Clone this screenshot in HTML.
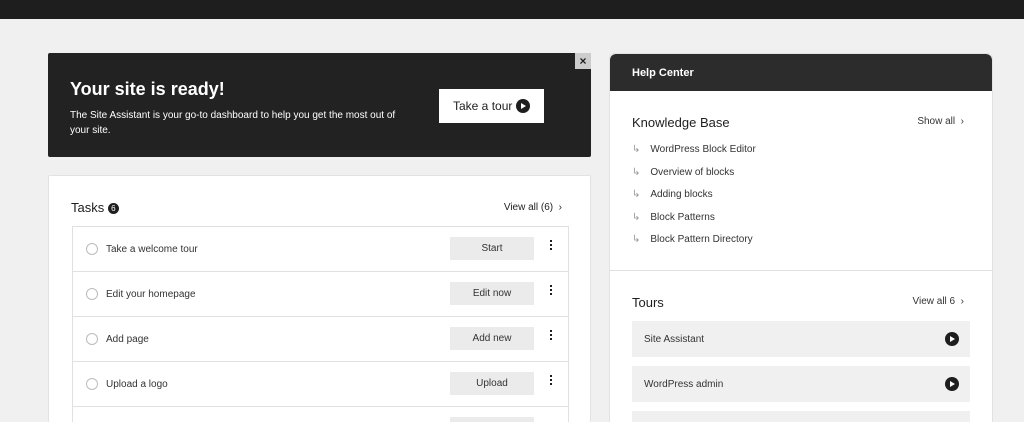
<!DOCTYPE html>
<html style="overflow:hidden;height:422px"><head><style>
*{box-sizing:border-box;margin:0;padding:0}
body{width:1024px;height:422px;overflow:hidden;background:#f0f0f1;font-family:"Liberation Sans",sans-serif;color:#1e1e1e;position:relative}
.top{position:absolute;left:0;top:0;width:1024px;height:19px;background:#1e1e1e}
.ban{position:absolute;left:48px;top:53px;width:543px;height:104px;background:#222;border-radius:2px;color:#fff}
.ban h1{position:absolute;left:22px;top:26px;font-size:18px;font-weight:bold}
.ban p{position:absolute;left:22px;top:55px;width:340px;font-size:10px;line-height:15px}
.tour{position:absolute;left:391px;top:36px;width:105px;height:34px;background:#fff;color:#1e1e1e;font-size:12px;line-height:34px;padding-left:14px}
.tour i{position:absolute;right:14px;top:10px;width:14px;height:14px;border-radius:50%;background:#1e1e1e}
.tour i:after{content:"";position:absolute;left:5px;top:4px;border-left:5px solid #fff;border-top:3px solid transparent;border-bottom:3px solid transparent}
.x{position:absolute;left:575px;top:53px;width:16px;height:16px;background:#ccc;font-size:12px;font-weight:bold;text-align:center;line-height:16px;color:#1e1e1e}
.tasks{position:absolute;left:48px;top:175px;width:543px;height:247px;background:#fff;border:1px solid #e2e2e2;border-bottom:0;border-radius:2px;overflow:hidden}
.th{position:absolute;left:22px;top:24px;font-size:13px}
.badge{display:inline-block;width:11px;height:11px;border-radius:50%;background:#1e1e1e;color:#fff;font-size:8px;text-align:center;line-height:11px;vertical-align:1px}
.va{position:absolute;right:28px;top:26px;font-size:10px}
.list{position:absolute;left:23px;top:50px;width:497px;border:1px solid #e0e0e0}
.row{height:45px;border-bottom:1px solid #e0e0e0;position:relative;font-size:10px}
.row .c{position:absolute;left:13px;top:16px;width:12px;height:12px;border:1px solid #bbb;border-radius:50%}
.row span{position:absolute;left:33px;top:17px;color:#333}
.row b{position:absolute;left:377px;top:10px;width:84px;height:23px;background:#ebebeb;font-weight:normal;text-align:center;line-height:24px;color:#333}
.row em{position:absolute;left:477px;top:13px;width:2px;height:2px;background:#1e1e1e;box-shadow:0 4px 0 #1e1e1e,0 8px 0 #1e1e1e}
.help{position:absolute;left:609px;top:53px;width:384px;height:369px;background:#fff;border-radius:6px 6px 0 0;border:1px solid #e2e2e2;border-bottom:0;overflow:hidden}
.hh{height:37px;background:#2c2c2c;border-radius:6px 6px 0 0;color:#fff;font-weight:bold;font-size:11px;padding:13px 22px}
.kb{position:absolute;left:22px;top:61px;font-size:13px}
.sa{position:absolute;right:28px;top:62px;font-size:10px;color:#333}
.lk{position:absolute;left:22px;font-size:10px;color:#333}
.lk s{text-decoration:none;color:#999;margin-right:10px}
.sep{position:absolute;left:0;right:0;top:216px;border-top:1px solid #e0e0e0}
.ti{position:absolute;left:22px;width:338px;height:36px;background:#f0f0f0;font-size:10px;line-height:38px;padding-left:12px;color:#333}
.ti i{position:absolute;right:11px;top:11px;width:14px;height:14px;border-radius:50%;background:#1e1e1e}
.ti i:after{content:"";position:absolute;left:5px;top:4px;border-left:5px solid #fff;border-top:3px solid transparent;border-bottom:3px solid transparent}
</style></head><body>
<div class="top"></div>
<div class="ban"><h1>Your site is ready!</h1><p>The Site Assistant is your go-to dashboard to help you get the most out of your site.</p><div class="tour">Take a tour<i></i></div></div>
<div class="x">×</div>
<div class="tasks">
<div class="th">Tasks <span class="badge">6</span></div>
<div class="va">View all (6) &nbsp;›</div>
<div class="list">
<div class="row"><div class="c"></div><span>Take a welcome tour</span><b>Start</b><em></em></div>
<div class="row"><div class="c"></div><span>Edit your homepage</span><b>Edit now</b><em></em></div>
<div class="row"><div class="c"></div><span>Add page</span><b>Add new</b><em></em></div>
<div class="row"><div class="c"></div><span>Upload a logo</span><b>Upload</b><em></em></div>
<div class="row" style="height:20px;border-bottom:0"><b></b></div>
</div></div>
<div class="help"><div class="hh">Help Center</div>
<div class="kb">Knowledge Base</div><div class="sa">Show all &nbsp;›</div>
<div class="lk" style="top:90px"><s>↳</s>WordPress Block Editor</div>
<div class="lk" style="top:113px"><s>↳</s>Overview of blocks</div>
<div class="lk" style="top:135px"><s>↳</s>Adding blocks</div>
<div class="lk" style="top:158px"><s>↳</s>Block Patterns</div>
<div class="lk" style="top:180px"><s>↳</s>Block Pattern Directory</div>
<div class="sep"></div>
<div class="kb" style="top:241px">Tours</div><div class="sa" style="top:242px">View all 6 &nbsp;›</div>
<div class="ti" style="top:267px">Site Assistant<i></i></div>
<div class="ti" style="top:312px">WordPress admin<i></i></div>
<div class="ti" style="top:357px;height:12px"></div>
</div>
</body></html>
